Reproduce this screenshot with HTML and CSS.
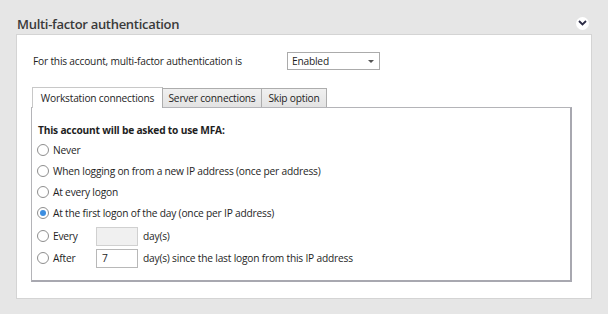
FILE: index.html
```html
<!DOCTYPE html>
<html lang="en">
<head>
    <meta charset="UTF-8">
    <title>Multi-factor authentication</title>
    <link rel="stylesheet" href="styles.css">
</head>
<body>

<div class="section">
    <div class="section-header">
        <h2 class="section-title">Multi-factor authentication</h2>
        <span class="collapse-btn">
            <svg width="9" height="6" viewBox="0 0 9 6"><path d="M1 1 L4.5 4.5 L8 1" fill="none" stroke="#2b2b45" stroke-width="1.8"/></svg>
        </span>
    </div>

    <div class="panel">
        <div class="setting-row">
            <label class="setting-label">For this account, multi-factor authentication is</label>
            <div class="dropdown">
                <span>Enabled</span>
                <span class="dropdown-arrow"></span>
            </div>
        </div>

        <div class="tabs">
            <div class="tab-strip">
                <div class="tab active" style="width: 131px">Workstation connections</div>
                <div class="tab" style="width: 99px">Server connections</div>
                <div class="tab" style="width: 65px">Skip option</div>
            </div>
            <div class="tab-body">
                <div class="group-title">This account will be asked to use MFA:</div>
                <label class="radio-row"><span class="radio"></span>Never</label>
                <label class="radio-row"><span class="radio"></span>When logging on from a new IP address (once per address)</label>
                <label class="radio-row"><span class="radio"></span>At every logon</label>
                <label class="radio-row"><span class="radio checked"></span>At the first logon of the day (once per IP address)</label>
                <label class="radio-row input-row first">
                    <span class="radio"></span>
                    <span class="radio-text">Every</span>
                    <span class="num-box disabled"></span>
                    <span>day(s)</span>
                </label>
                <label class="radio-row input-row">
                    <span class="radio"></span>
                    <span class="radio-text">After</span>
                    <span class="num-box">7</span>
                    <span>day(s) since the last logon from this IP address</span>
                </label>
            </div>
        </div>
    </div>
</div>

</body>
</html>
```

FILE: styles.css
```css
body {
    margin: 0;
    background-color: #e6e6e6;
    font-family: "Open Sans", "Noto Sans", sans-serif;
    font-size: 10.2px;
    letter-spacing: -0.2px;
    color: #1e1e1e;
}
.section {
    padding: 14px 16px 0 16px;
}
.section-header {
    display: flex;
    justify-content: space-between;
    align-items: center;
    height: 20px;
}
.section-title {
    margin: 0 0 0 1px;
    font-size: 13px;
    font-weight: 600;
    letter-spacing: -0.3px;
    color: #3a3a3a;
    line-height: 20px;
}
.collapse-btn {
    width: 13px;
    height: 13px;
    border-radius: 50%;
    background: white;
    display: flex;
    justify-content: center;
    align-items: center;
    margin-right: 3px;
    margin-top: -2px;
}
.panel {
    box-sizing: border-box;
    background: white;
    border: 1px solid #d4d4d4;
    height: 265px;
    padding: 17px 20px 0 14px;
}
.setting-row {
    display: flex;
    align-items: center;
    padding-left: 2px;
    height: 18px;
}
.setting-label {
    width: 254px;
}
.dropdown {
    box-sizing: border-box;
    width: 93px;
    height: 18px;
    border: 1px solid #ababab;
    display: flex;
    align-items: center;
    justify-content: space-between;
    padding: 0 5px 0 4px;
}
.dropdown-arrow {
    width: 0;
    height: 0;
    border-left: 3px solid transparent;
    border-right: 3px solid transparent;
    border-top: 3px solid #555;
}
.tabs {
    margin-top: 17px;
}
.tab-strip {
    display: flex;
    align-items: flex-end;
    padding-left: 1px;
    height: 20px;
    position: relative;
    z-index: 1;
}
.tab {
    box-sizing: border-box;
    height: 19px;
    border: 1px solid #adadad;
    border-bottom: none;
    border-left: none;
    background: linear-gradient(#f0f0f0, #e3e3e3);
    text-align: center;
    line-height: 18px;
}
.tab.active {
    height: 21px;
    margin-bottom: -1px;
    background: white;
    border-left: 1px solid #c8c8c8;
    border-top-color: #c8c8c8;
    line-height: 20px;
}
.tab-body {
    box-sizing: border-box;
    width: 541px;
    height: 175px;
    border: 1px solid #b4b4b8;
    border-bottom-width: 2px;
    border-right-width: 2px;
    border-bottom-color: #a8a8b0;
    border-right-color: #a8a8b0;
    padding: 13px 6px 0 5px;
}
.group-title {
    font-weight: 700;
    line-height: 18px;
    padding-left: 1px;
}
.radio-row {
    display: flex;
    align-items: center;
    height: 21px;
}
.radio {
    box-sizing: border-box;
    width: 12px;
    height: 12px;
    border: 1px solid #8e8e8e;
    border-radius: 50%;
    background: white;
    margin-right: 4px;
    flex-shrink: 0;
    display: flex;
    justify-content: center;
    align-items: center;
}
.radio.checked::after {
    content: "";
    width: 6px;
    height: 6px;
    border-radius: 50%;
    background: #3d8ee0;
}
.input-row {
    height: 22px;
}
.input-row.first {
    margin-top: 2px;
}
.radio-text {
    width: 43px;
}
.num-box {
    box-sizing: border-box;
    width: 42px;
    height: 19px;
    border: 1px solid #b8b8b8;
    margin-right: 5px;
    padding-left: 5px;
    line-height: 17px;
}
.num-box.disabled {
    background: #f0f0f0;
    border-color: #d0d0d0;
}
```
